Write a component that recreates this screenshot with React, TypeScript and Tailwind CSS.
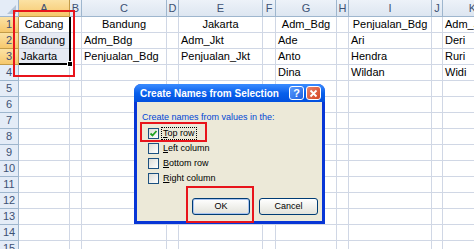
const cols = ["A", "B", "C", "D", "E", "F", "G", "H", "I", "J", "K"];

type Cell = { text: string; align?: "center" | "left" };

const data: Record<string, Cell> = {
  A1: { text: "Cabang", align: "center" },
  C1: { text: "Bandung", align: "center" },
  E1: { text: "Jakarta", align: "center" },
  G1: { text: "Adm_Bdg", align: "center" },
  I1: { text: "Penjualan_Bdg", align: "center" },
  K1: { text: "Adm_Jkt" },
  A2: { text: "Bandung" },
  C2: { text: "Adm_Bdg" },
  E2: { text: "Adm_Jkt" },
  G2: { text: "Ade" },
  I2: { text: "Ari" },
  K2: { text: "Deri" },
  A3: { text: "Jakarta" },
  C3: { text: "Penjualan_Bdg" },
  E3: { text: "Penjualan_Jkt" },
  G3: { text: "Anto" },
  I3: { text: "Hendra" },
  K3: { text: "Ruri" },
  G4: { text: "Dina" },
  I4: { text: "Wildan" },
  K4: { text: "Widi" },
};

const rows = Array.from({ length: 15 }, (_, i) => i + 1);

function Sheet() {
  return (
    <div className="grid grid-cols-[19px_51px_12px_85px_12px_84px_13px_61px_12px_83px_11px_60px_40px] grid-rows-[17px] auto-rows-[16px] w-[543px]">
      <div className="relative border-r border-b border-[#9eb6ce] bg-[#e4ecf7]">
        <div className="absolute right-[2px] bottom-[2px] w-0 h-0 border-l-[9px] border-l-transparent border-b-[9px] border-b-[#b3c4d8]" />
      </div>
      {cols.map((c) => (
        <div
          key={c}
          className={
            c === "A"
              ? "flex items-center justify-center border-r border-b border-[#c29b48] bg-linear-to-b from-[#fbe2a4] to-[#f6c86c] text-[11px] text-[#3d5174]"
              : "flex items-center justify-center border-r border-b border-[#9eb6ce] bg-linear-to-b from-[#edf2f9] to-[#dde6f1] text-[11px] text-[#3d5174]"
          }
        >
          {c}
        </div>
      ))}
      <div className="border-b border-[#9eb6ce] bg-[#dde6f1]" />
      {rows.map((r) => (
        <Row key={r} r={r} />
      ))}
    </div>
  );
}

function Row({ r }: { r: number }) {
  const sel = r <= 3;
  return (
    <>
      <div
        className={
          sel
            ? "flex items-center justify-center border-r border-b border-[#c29b48] bg-linear-to-b from-[#fbe2a4] to-[#f6c86c] text-[11px] text-[#3d5174]"
            : "flex items-center justify-center border-r border-b border-[#9eb6ce] bg-[#e4ecf7] text-[11px] text-[#3d5174]"
        }
      >
        {r}
      </div>
      {[...cols, "L"].map((c) => {
        const cell = data[c + r];
        const shaded = c === "A" && (r === 2 || r === 3);
        return (
          <div
            key={c}
            className={
              (shaded ? "bg-[#e6eaf3] " : "bg-white ") +
              "flex items-center overflow-visible whitespace-nowrap border-r border-b border-[#d0d7e5] text-[11px] text-black " +
              (cell?.align === "center" ? "justify-center" : "pl-[2px]")
            }
          >
            {cell?.text}
          </div>
        );
      })}
    </>
  );
}

function Check({ on }: { on?: boolean }) {
  return (
    <div className="flex items-center justify-center w-[11px] h-[11px] border border-[#1c5180] bg-linear-to-br from-[#dcdcd7] to-white">
      {on && (
        <svg width="9" height="9" viewBox="0 0 9 9">
          <path d="M1.5 4.5 L3.5 6.5 L7.5 2" fill="none" stroke="#21a121" strokeWidth="1.8" />
        </svg>
      )}
    </div>
  );
}

function Option({ first, rest, on, focus }: { first: string; rest: string; on?: boolean; focus?: boolean }) {
  return (
    <div className="flex items-center h-[15px] gap-[2px]">
      <Check on={on} />
      <span className={focus ? "border border-dotted border-black px-[1px] leading-[11px]" : "leading-[11px] px-[2px]"}>
        <span className="underline">{first}</span>
        {rest}
      </span>
    </div>
  );
}

function Dialog() {
  return (
    <div className="absolute left-[134px] top-[84px] w-[191px] h-[140px] flex flex-col rounded-t-[7px] bg-[#0836d6] overflow-hidden font-['Liberation_Sans',sans-serif]">
      <div className="h-[18px] flex items-center pl-[6px] pr-[4px] bg-linear-to-b from-[#3a8cff] via-[#0860ec] to-[#0350de]">
        <span className="flex-1 text-[10px] font-bold text-white whitespace-nowrap">Create Names from Selection</span>
        <div className="flex gap-[2px]">
          <div className="w-[15px] h-[14px] rounded-[3px] border border-white bg-linear-to-br from-[#5b9bff] to-[#1c5fe0] flex items-center justify-center text-[11px] font-bold text-white leading-none">
            ?
          </div>
          <div className="w-[15px] h-[14px] rounded-[3px] border border-white bg-linear-to-br from-[#e8826a] to-[#d4411b] flex items-center justify-center">
            <svg width="9" height="9" viewBox="0 0 9 9">
              <path d="M1.5 1.5 L7.5 7.5 M7.5 1.5 L1.5 7.5" stroke="white" strokeWidth="1.8" />
            </svg>
          </div>
        </div>
      </div>
      <div className="flex-1 mx-[3px] mb-[3px] bg-[#ece9d8] flex flex-col pt-[10px] text-[9px] text-black">
        <div className="pl-[5px] leading-[11px] text-[#0046d5]">Create names from values in the:</div>
        <div className="mt-[3px] pl-[11px] flex flex-col">
          <Option first="T" rest="op row" on focus />
          <Option first="L" rest="eft column" />
          <Option first="B" rest="ottom row" />
          <Option first="R" rest="ight column" />
        </div>
        <div className="mt-[12px] pr-[4px] flex justify-end gap-[9px]">
          <div className="w-[58px] h-[17px] rounded-[3px] border border-[#003c74] bg-linear-to-b from-white to-[#e3e3db] flex items-center justify-center shadow-[inset_0_0_0_1px_#a9c4f0]">
            OK
          </div>
          <div className="w-[59px] h-[17px] rounded-[3px] border border-[#003c74] bg-linear-to-b from-white to-[#e3e3db] flex items-center justify-center">
            Cancel
          </div>
        </div>
      </div>
    </div>
  );
}

export default function App() {
  return (
    <div className="relative w-[474px] h-[249px] overflow-hidden bg-white font-['Liberation_Sans',sans-serif]">
      <Sheet />
      <div className="absolute left-[19px] top-[17px] w-[52px] h-[48px] border-r-2 border-b-2 border-black">
        <div className="absolute right-[-4px] bottom-[-4px] w-[6px] h-[6px] bg-black border border-white" />
      </div>
      <Dialog />
      <div className="absolute left-[13px] top-[10px] w-[62px] h-[67px] border-2 border-[#e8141b]" />
      <div className="absolute left-[140px] top-[122px] w-[67px] h-[20px] border-2 border-[#e8141b]" />
      <div className="absolute left-[186px] top-[186px] w-[68px] h-[37px] border-2 border-[#e8141b]" />
    </div>
  );
}
